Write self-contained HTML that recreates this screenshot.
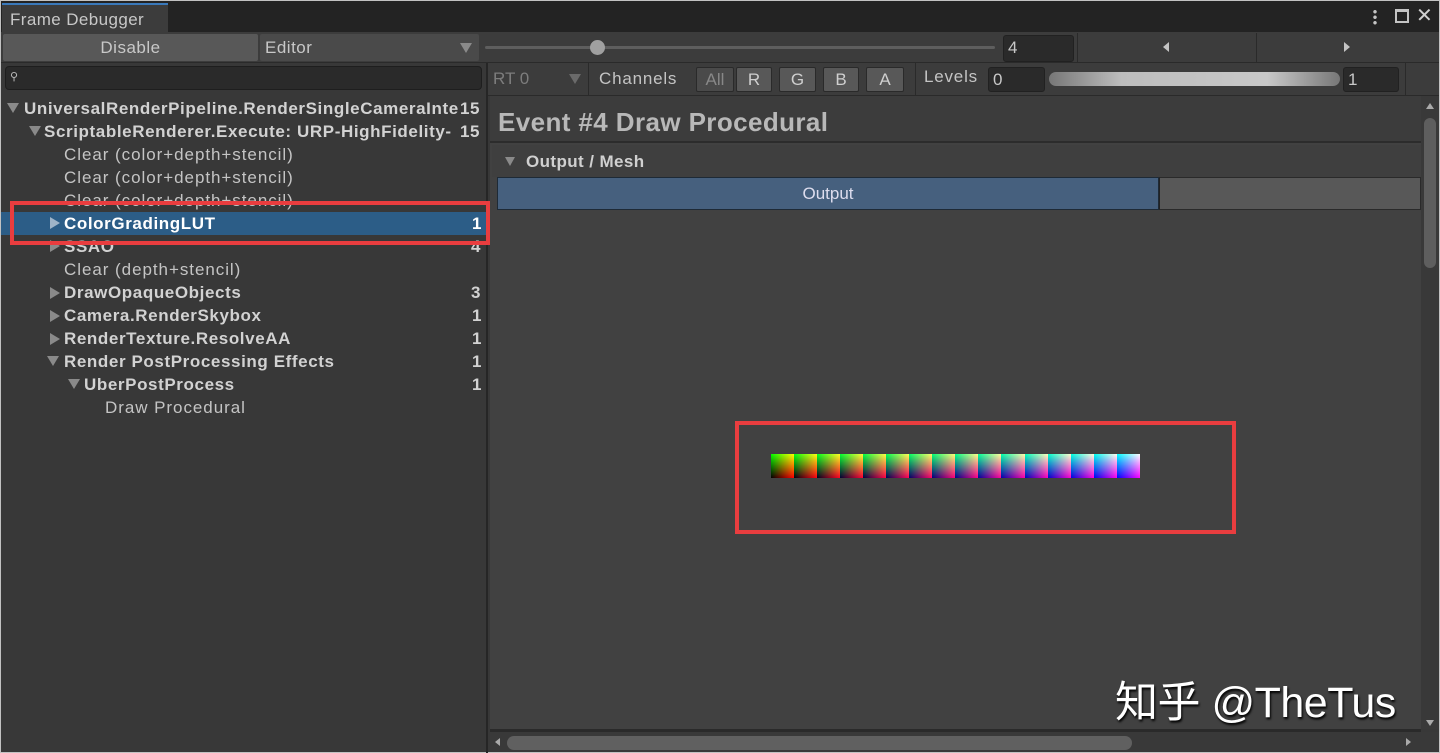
<!DOCTYPE html>
<html><head><meta charset="utf-8"><style>
*{box-sizing:border-box;margin:0;padding:0}
body{width:1440px;height:753px;overflow:hidden;background:#c2c2c2;font-family:"Liberation Sans","Noto Sans CJK SC",sans-serif;color:#c4c4c4;position:relative}
.a{position:absolute}
.t{font-size:17px;white-space:nowrap;line-height:23px;letter-spacing:0.95px}
.b{font-weight:bold;color:#d2d2d2;letter-spacing:0.6px}
.tri{position:absolute;width:0;height:0}
.dn{border-left:6px solid transparent;border-right:6px solid transparent;border-top:10px solid #8a8a8a}
.rt{border-top:6px solid transparent;border-bottom:6px solid transparent;border-left:10px solid #8a8a8a}
.fld{background:#2a2a2a;border:1px solid #212121;border-radius:3px;font-size:17px;color:#c8c8c8;padding-left:4px;line-height:24px}
.chb{background:#585858;border:1px solid #2a2a2a;border-radius:2px;text-align:center;font-size:17px;line-height:24px;color:#cfcfcf}
</style></head><body>
<div class="a" style="left:1px;top:1px;width:1438px;height:751px;background:#383838"></div>
<div class="a" style="left:1px;top:1px;width:1438px;height:31px;background:#232323"></div>
<div class="a" style="left:2px;top:3px;width:166px;height:30px;background:#3c3c3c;border-top:2px solid #3a79bb"></div>
<div class="a t" style="left:10px;top:8px;color:#c8c8c8;letter-spacing:0.4px">Frame Debugger</div>
<div class="a" style="left:1373px;top:9px;width:4px;height:16px;background:radial-gradient(circle,#c4c4c4 1.5px,transparent 2px) 0 0/4px 5.5px"></div>
<div class="a" style="left:1395px;top:9px;width:14px;height:14px;border:2px solid #c4c4c4;border-top-width:3px"></div>
<div class="a" style="left:1416px;top:3px;font-size:20px;color:#d0d0d0">✕</div>
<div class="a" style="left:1px;top:32px;width:1438px;height:31px;background:#3c3c3c;border-bottom:1px solid #2a2a2a"></div>
<div class="a" style="left:3px;top:34px;width:255px;height:27px;background:#585858;border-radius:2px;text-align:center;font-size:17px;line-height:27px;color:#c8c8c8;letter-spacing:0.5px">Disable</div>
<div class="a" style="left:260px;top:34px;width:219px;height:27px;background:#4a4a4a;border-radius:2px;font-size:17px;line-height:27px;padding-left:5px;color:#c8c8c8;letter-spacing:0.5px">Editor</div>
<div class="tri dn" style="left:460px;top:43px"></div>
<div class="a" style="left:485px;top:46px;width:510px;height:3px;background:#5e5e5e;border-radius:2px"></div>
<div class="a" style="left:590px;top:40px;width:15px;height:15px;background:#a0a0a0;border-radius:50%"></div>
<div class="a fld" style="left:1003px;top:35px;width:71px;height:27px">4</div>
<div class="a" style="left:1077px;top:33px;width:1px;height:29px;background:#2a2a2a"></div>
<div class="a" style="left:1256px;top:33px;width:1px;height:29px;background:#2a2a2a"></div>
<div class="tri" style="left:1163px;top:42px;border-top:5px solid transparent;border-bottom:5px solid transparent;border-right:6px solid #c4c4c4"></div>
<div class="tri" style="left:1344px;top:42px;border-top:5px solid transparent;border-bottom:5px solid transparent;border-left:6px solid #c4c4c4"></div>
<div class="a" style="left:5px;top:66px;width:477px;height:24px;background:#2a2a2a;border:1px solid #1e1e1e;border-radius:4px"></div>
<div class="a" style="left:10px;top:70px;font-size:11px;color:#bbb">&#9906;</div>
<div class="a" style="left:486px;top:63px;width:2px;height:690px;background:#262626"></div>

<div class="tri dn" style="left:7px;top:103px"></div>
<div class="a t b" style="left:24px;top:97px;width:436px;overflow:hidden">UniversalRenderPipeline.RenderSingleCameraInte</div>
<div class="a t b" style="left:460px;top:97px">15</div>
<div class="tri dn" style="left:29px;top:126px"></div>
<div class="a t b" style="left:44px;top:120px;width:416px;overflow:hidden">ScriptableRenderer.Execute: URP-HighFidelity-</div>
<div class="a t b" style="left:460px;top:120px">15</div>
<div class="a t" style="left:64px;top:143px">Clear (color+depth+stencil)</div>
<div class="a t" style="left:64px;top:166px">Clear (color+depth+stencil)</div>
<div class="a t" style="left:64px;top:189px">Clear (color+depth+stencil)</div>
<div class="a" style="left:1px;top:212px;width:485px;height:23px;background:#2c5d87"></div>
<div class="tri rt" style="left:50px;top:217px;border-left-color:#9fb4c8"></div>
<div class="a t b" style="left:64px;top:212px;color:#fff">ColorGradingLUT</div>
<div class="a t b" style="left:472px;top:212px;color:#fff">1</div>
<div class="tri rt" style="left:50px;top:240px"></div>
<div class="a t b" style="left:64px;top:235px">SSAO</div>
<div class="a t b" style="left:471px;top:235px">4</div>
<div class="a t" style="left:64px;top:258px">Clear (depth+stencil)</div>
<div class="tri rt" style="left:50px;top:287px"></div>
<div class="a t b" style="left:64px;top:281px">DrawOpaqueObjects</div><div class="a t b" style="left:471px;top:281px">3</div>
<div class="tri rt" style="left:50px;top:310px"></div>
<div class="a t b" style="left:64px;top:304px">Camera.RenderSkybox</div><div class="a t b" style="left:472px;top:304px">1</div>
<div class="tri rt" style="left:50px;top:333px"></div>
<div class="a t b" style="left:64px;top:327px">RenderTexture.ResolveAA</div><div class="a t b" style="left:472px;top:327px">1</div>
<div class="tri dn" style="left:47px;top:356px"></div>
<div class="a t b" style="left:64px;top:350px">Render PostProcessing Effects</div><div class="a t b" style="left:472px;top:350px">1</div>
<div class="tri dn" style="left:68px;top:379px"></div>
<div class="a t b" style="left:84px;top:373px">UberPostProcess</div><div class="a t b" style="left:472px;top:373px">1</div>
<div class="a t" style="left:105px;top:396px">Draw Procedural</div>
<div class="a" style="left:10px;top:201px;width:480px;height:44px;border:4px solid #e93d3f"></div>
<div class="a" style="left:488px;top:63px;width:951px;height:33px;background:#3c3c3c;border-bottom:1px solid #2a2a2a"></div>
<div class="a" style="left:493px;top:67px;font-size:17px;line-height:24px;color:#7d7d7d">RT 0</div>
<div class="tri dn" style="left:569px;top:74px;border-top-color:#6a6a6a"></div>
<div class="a" style="left:588px;top:63px;width:1px;height:33px;background:#2a2a2a"></div>
<div class="a" style="left:599px;top:67px;font-size:17px;line-height:24px;color:#c4c4c4;letter-spacing:0.8px">Channels</div>
<div class="a chb" style="left:696px;top:67px;width:38px;height:25px;background:#4a4a4a;color:#888">All</div>
<div class="a chb" style="left:736px;top:67px;width:36px;height:25px">R</div>
<div class="a chb" style="left:779px;top:67px;width:37px;height:25px">G</div>
<div class="a chb" style="left:823px;top:67px;width:36px;height:25px">B</div>
<div class="a chb" style="left:866px;top:67px;width:38px;height:25px">A</div>
<div class="a" style="left:915px;top:63px;width:1px;height:33px;background:#2a2a2a"></div>
<div class="a" style="left:924px;top:65px;font-size:17px;line-height:24px;color:#c4c4c4;letter-spacing:0.8px">Levels</div>
<div class="a fld" style="left:988px;top:67px;width:57px;height:25px">0</div>
<div class="a" style="left:1049px;top:72px;width:291px;height:14px;border-radius:7px;background:linear-gradient(90deg,#777,#bdbdbd 25%,#c8c8c8 75%,#777)"></div>
<div class="a fld" style="left:1343px;top:67px;width:56px;height:25px">1</div>
<div class="a" style="left:1405px;top:63px;width:1px;height:33px;background:#2a2a2a"></div>
<div class="a" style="left:490px;top:96px;width:931px;height:633px;background:#414141"></div>
<div class="a" style="left:490px;top:96px;width:931px;height:47px;background:#3c3c3c;border-bottom:2px solid #2c2c2c"></div>
<div class="a" style="left:498px;top:107px;font-size:26px;font-weight:bold;color:#b8b8b8;white-space:nowrap;letter-spacing:0.4px">Event #4 Draw Procedural</div>
<div class="a" style="left:492px;top:145px;width:929px;height:32px;background:#3f3f3f"></div>
<div class="tri dn" style="left:505px;top:157px;border-left-width:5px;border-right-width:5px;border-top-width:9px"></div>
<div class="a" style="left:526px;top:152px;font-size:17px;font-weight:bold;color:#d0d0d0;letter-spacing:0.4px">Output / Mesh</div>
<div class="a" style="left:497px;top:177px;width:662px;height:33px;background:#46607e;border:1px solid #1e2a36;text-align:center;font-size:17px;line-height:31px;color:#dde">Output</div>
<div class="a" style="left:1159px;top:177px;width:262px;height:33px;background:#585858;border:1px solid #2a2a2a;border-left:1px solid #222"></div>
<div class="a" style="left:771px;top:454px;width:369px;height:24px;display:flex" id="lut"></div>
<div class="a" style="left:735px;top:421px;width:501px;height:113px;border:4px solid #e93d3f"></div>
<div class="a" style="left:1421px;top:96px;width:18px;height:633px;background:#393939"></div>
<div class="tri" style="left:1426px;top:103px;border-left:4px solid transparent;border-right:4px solid transparent;border-bottom:6px solid #aaa"></div>
<div class="a" style="left:1424px;top:118px;width:12px;height:150px;background:#5e5e5e;border-radius:6px"></div>
<div class="tri" style="left:1426px;top:720px;border-left:4px solid transparent;border-right:4px solid transparent;border-top:6px solid #aaa"></div>
<div class="a" style="left:490px;top:729px;width:931px;height:3px;background:#2a2a2a"></div>
<div class="a" style="left:490px;top:732px;width:949px;height:20px;background:#393939"></div>
<div class="tri" style="left:495px;top:738px;border-top:4px solid transparent;border-bottom:4px solid transparent;border-right:5px solid #aaa"></div>
<div class="a" style="left:507px;top:736px;width:625px;height:14px;background:#606060;border-radius:7px"></div>
<div class="tri" style="left:1406px;top:738px;border-top:4px solid transparent;border-bottom:4px solid transparent;border-left:5px solid #aaa"></div>
<div class="a" style="left:1115px;top:668px;font-size:43px;color:#fff;white-space:nowrap;text-shadow:1px 2px 2px #000;font-family:'Liberation Sans','WenQuanYi Zen Hei',sans-serif;letter-spacing:-0.5px">知乎 @TheTus</div>
<script>
var l=document.getElementById('lut');
for(var i=0;i<16;i++){var b=Math.round(i*255/15),d=document.createElement('div');
d.style.cssText='width:23.06px;height:24px;background:linear-gradient(0deg,rgba(0,0,0,0),rgb(0,255,0)),linear-gradient(90deg,rgb(0,0,'+b+'),rgb(255,0,'+b+'));background-blend-mode:screen';
l.appendChild(d);}
</script>
</body></html>
